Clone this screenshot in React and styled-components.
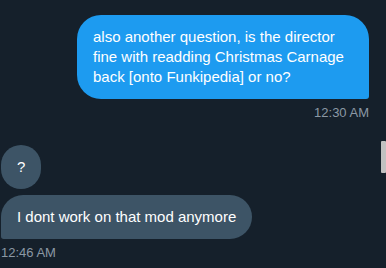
import React from "react";
import styled, { createGlobalStyle } from "styled-components";

const GlobalStyle = createGlobalStyle`
  html, body {
    margin: 0;
    padding: 0;
    background: #15202b;
  }
  body {
    font-family: "Liberation Sans", Arial, sans-serif;
    overflow: hidden;
  }
`;

const Conversation = styled.section`
  position: relative;
  width: 386px;
  height: 268px;
  box-sizing: border-box;
  padding: 15px 17px 0 1px;
  display: flex;
  flex-direction: column;
  background: #15202b;
  overflow: hidden;
`;

const Group = styled.div`
  display: flex;
  flex-direction: column;
  align-items: ${(p) => (p.$mine ? "flex-end" : "flex-start")};
  gap: 6px;
  margin-bottom: ${(p) => p.$gapAfter || 0}px;
`;

const Bubble = styled.div`
  max-width: 292px;
  box-sizing: border-box;
  padding: 12px 16px;
  font-size: 15px;
  line-height: 20px;
  color: #ffffff;
  background: ${(p) => (p.$mine ? "#1d9bf0" : "#3d5466")};
  border-radius: ${(p) => (p.$tail ? (p.$mine ? "24px 24px 3px 24px" : "24px 24px 24px 3px") : "22px")};
`;

const Time = styled.div`
  font-size: 13px;
  line-height: 16px;
  color: #8b98a5;
`;

const Scrollbar = styled.div`
  position: absolute;
  right: 0;
  top: 141px;
  width: 5px;
  height: 32px;
  border-radius: 1px;
  background: #c1c1c1;
`;

const messages = [
  {
    mine: true,
    items: ["also another question, is the director fine with readding Christmas Carnage back [onto Funkipedia] or no?"],
    time: "12:30 AM",
  },
  {
    mine: false,
    items: ["?", "I dont work on that mod anymore"],
    time: "12:46 AM",
  },
];

export default function App() {
  return (
    <>
      <GlobalStyle />
      <Conversation>
        {messages.map((m, i) => (
          <Group key={i} $mine={m.mine} $gapAfter={i === 0 ? 24 : 0}>
            {m.items.map((text, j) => (
              <Bubble key={j} $mine={m.mine} $tail={j === m.items.length - 1}>
                {text}
              </Bubble>
            ))}
            <Time>{m.time}</Time>
          </Group>
        ))}
        <Scrollbar />
      </Conversation>
    </>
  );
}
